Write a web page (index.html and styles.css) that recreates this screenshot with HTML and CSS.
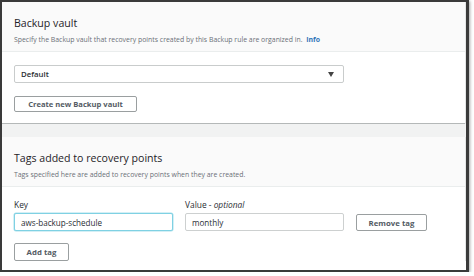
FILE: index.html
```html
<!DOCTYPE html>
<html lang="en">
<head>
    <meta charset="UTF-8">
    <title>Backup rule</title>
    <link rel="stylesheet" href="styles.css">
</head>
<body>

<div class="frame">
    <section class="panel">
        <div class="panel-header">
            <h2>Backup vault</h2>
            <p>Specify the Backup vault that recovery points created by this Backup rule are organized in. <a href="#">Info</a></p>
        </div>
        <div class="panel-body">
            <div class="select">
                <span>Default</span>
                <span class="caret"></span>
            </div>
            <button class="btn btn-create">Create new Backup vault</button>
        </div>
    </section>

    <div class="gap"></div>

    <section class="panel">
        <div class="panel-header">
            <h2>Tags added to recovery points</h2>
            <p>Tags specified here are added to recovery points when they are created.</p>
        </div>
        <div class="panel-body">
            <div class="tag-row">
                <div class="field">
                    <label class="field-label" for="tagKey">Key</label>
                    <input type="text" id="tagKey" class="input input-focus" value="aws-backup-schedule">
                </div>
                <div class="field">
                    <label class="field-label" for="tagValue">Value - <i>optional</i></label>
                    <input type="text" id="tagValue" class="input" value="monthly">
                </div>
                <button class="btn btn-remove">Remove tag</button>
            </div>
            <button class="btn btn-add">Add tag</button>
        </div>
    </section>
</div>

</body>
</html>
```

FILE: styles.css
```css
body {
    margin: 0;
    background: #fff;
    font-family: 'Open Sans', sans-serif;
}
.frame {
    width: 464px;
    height: 268px;
    border: 2px solid #3a3a3a;
    border-right-width: 3px;
    box-shadow: 1px 1px 3px rgba(0, 0, 0, 0.35);
    background: #fff;
    overflow: hidden;
}
.panel {
    border-right: 1px solid #e4e6e6;
}
.panel-header {
    background: #fafafa;
    height: 49px;
    border-bottom: 1px solid #eaeded;
    padding: 0 12px;
}
.panel-header h2 {
    margin: 0;
    padding-top: 14px;
    font-size: 10.6px;
    line-height: 15px;
    font-weight: normal;
    color: #1f2328;
}
.panel-header p {
    margin: 4px 0 0;
    font-size: 6.9px;
    line-height: 10px;
    color: #6b7078;
}
.panel-header a {
    color: #2f74b8;
    font-weight: bold;
    text-decoration: none;
    margin-left: 2px;
}
.panel-body {
    padding: 13px 12px 0;
}
.panel:first-child .panel-body {
    height: 58px;
    border-bottom: 1px solid #b4b8b8;
}
.gap {
    height: 13px;
    background: #f1f2f2;
}
.select {
    width: 313px;
    height: 16px;
    border: 1px solid #c9cccc;
    border-radius: 2px;
    display: flex;
    align-items: center;
    justify-content: space-between;
    padding: 0 9px 0 6px;
    font-size: 7.8px;
    font-weight: 600;
    color: #2a2e33;
}
.caret {
    width: 0;
    height: 0;
    border-left: 3.5px solid transparent;
    border-right: 3.5px solid transparent;
    border-top: 5px solid #444;
}
.btn {
    display: block;
    background: #fff;
    border: 1px solid #9a9fa0;
    border-radius: 2px;
    font-family: 'Open Sans', sans-serif;
    font-size: 7.8px;
    font-weight: bold;
    color: #545b64;
    padding: 0;
}
.btn-create {
    margin-top: 13px;
    width: 123px;
    height: 16px;
    font-size: 7.6px;
}
.tag-row {
    display: flex;
    align-items: flex-end;
    gap: 12px;
}
.field {
    display: flex;
    flex-direction: column;
}
.field-label {
    font-size: 8.4px;
    line-height: 10px;
    color: #2a2e33;
    margin-bottom: 3px;
}
.input {
    width: 159px;
    height: 18px;
    box-sizing: border-box;
    border: 1px solid #cdd0d0;
    border-radius: 2px;
    padding: 0 6px;
    font-family: 'Open Sans', sans-serif;
    font-size: 8.1px;
    color: #2a2e33;
    margin: 0;
}
.input-focus {
    border-color: #7fd1e3;
    box-shadow: 0 0 0 0.5px #a9e0ec;
}
.btn-remove {
    width: 71px;
    height: 17px;
}
.btn-add {
    margin-top: 12px;
    width: 55px;
    height: 18px;
}
```
